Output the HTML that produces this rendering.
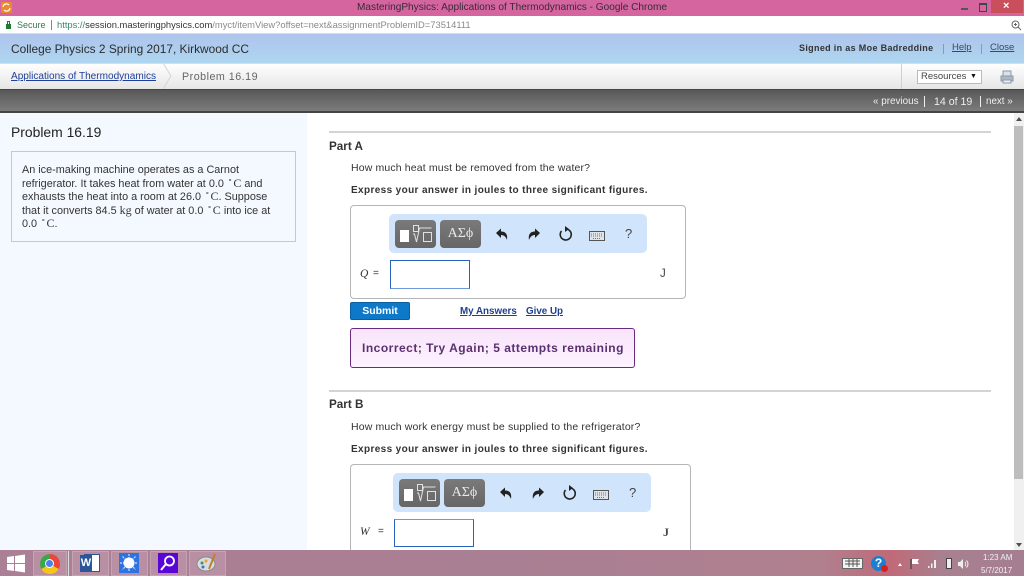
<!DOCTYPE html>
<html><head><meta charset="utf-8"><style>
html,body{margin:0;padding:0;width:1024px;height:576px;overflow:hidden;background:#fff}
body{position:relative;font-family:"Liberation Sans",sans-serif;color:#333}
.a{position:absolute;white-space:nowrap}
.l{color:#1a3a8f;text-decoration:underline}
.s{font-family:"Liberation Serif",serif;font-size:12px;line-height:0}
.s sup{font-size:7px;line-height:0;margin:0 1px}
svg{position:absolute;overflow:visible}
.task{position:absolute;top:551px;height:25px;width:37px;background:#b88fa3;box-shadow:inset 0 0 0 1px #c4a3b3}
</style></head><body>
<!-- title bar -->
<div class="a" style="left:0;top:0;width:1024px;height:16px;background:#d4659e"></div>
<div class="a" style="left:1px;top:2px;width:11px;height:11px;background:#ee8a2c;border-radius:2px"></div>
<svg style="left:1px;top:2px" width="11" height="11"><path d="M2 5a3.5 3.5 0 0 1 6-2M9 6a3.5 3.5 0 0 1-6 2" fill="none" stroke="#fff" stroke-width="1.2"/></svg>
<div class="a" style="left:357px;top:2px;font-size:10.1px;line-height:12px;color:#3a2a3a">MasteringPhysics: Applications of Thermodynamics - Google Chrome</div>
<div class="a" style="left:961px;top:8px;width:7px;height:2px;background:#555"></div>
<div class="a" style="left:979px;top:3px;width:6px;height:6px;border:1px solid #444;border-top-width:2px"></div>
<div class="a" style="left:991px;top:0;width:32px;height:13px;background:#c94f5c"></div>
<div class="a" style="left:1003px;top:0;font-size:11px;line-height:12px;font-weight:bold;color:#fff">×</div>
<!-- address -->
<div class="a" style="left:0;top:16px;width:1024px;height:17px;background:#fff;border-bottom:1px solid #dcdcdc"></div>
<div class="a" style="left:6px;top:24px;width:5px;height:5px;background:#1f7a35"></div>
<div class="a" style="left:7px;top:21px;width:3px;height:3px;border:1px solid #1f7a35;border-bottom:0;box-sizing:border-box"></div>
<div class="a" style="left:17px;top:19px;font-size:9px;line-height:12px;color:#2f7d4a">Secure</div>
<div class="a" style="left:51px;top:20px;width:1px;height:10px;background:#888"></div>
<div class="a" style="left:57px;top:19px;font-size:9.4px;line-height:12px;color:#8a8a8a"><span style="color:#2f8a6a">https://</span><span style="color:#333">session.masteringphysics.com</span>/myct/itemView?offset=next&amp;assignmentProblemID=73514111</div>
<svg style="left:1011px;top:20px" width="11" height="11"><circle cx="4.5" cy="4.5" r="3.5" fill="none" stroke="#666"/><path d="M7 7l3 3M3 4.5h3M4.5 3v3" stroke="#666"/></svg>
<!-- course header -->
<div class="a" style="left:0;top:34px;width:1024px;height:29px;background:linear-gradient(#aec4ec,#aed6f0)"></div>
<div class="a" style="left:11px;top:42px;font-size:11.9px;line-height:14px;color:#2c2c2c">College Physics 2 Spring 2017, Kirkwood CC</div>
<div class="a" style="left:799px;top:42px;font-size:9px;line-height:12px;font-weight:bold;letter-spacing:.33px;color:#333">Signed in as Moe Badreddine</div>
<div class="a" style="left:943px;top:44px;width:1px;height:10px;background:#8a9ab0"></div>
<div class="a" style="left:952px;top:42px;font-size:9.5px;line-height:12px;color:#445;text-decoration:underline">Help</div>
<div class="a" style="left:981px;top:44px;width:1px;height:10px;background:#8a9ab0"></div>
<div class="a" style="left:990px;top:42px;font-size:9.5px;line-height:12px;color:#445;text-decoration:underline">Close</div>
<!-- breadcrumb -->
<div class="a" style="left:0;top:63px;width:1024px;height:26px;background:linear-gradient(#fff,#e6e6e6);border-top:1px solid #ddd;box-sizing:border-box"></div>
<svg style="left:161px;top:63px" width="14" height="26"><path d="M2 0l8 13-8 13" fill="none" stroke="#d5d5d5"/></svg>
<div class="a l" style="left:11px;top:71px;font-size:10.05px;line-height:12px;color:#1d3f9a">Applications of Thermodynamics</div>
<div class="a" style="left:182px;top:70px;font-size:10.7px;line-height:14px;letter-spacing:.5px;color:#666">Problem 16.19</div>
<div class="a" style="left:901px;top:63px;width:1px;height:26px;background:#d0d0d0"></div>
<div class="a" style="left:917px;top:70px;width:65px;height:14px;background:#fff;border:1px solid #bbb;box-sizing:border-box"></div>
<div class="a" style="left:921px;top:71px;font-size:9.5px;line-height:12px;color:#444">Resources</div>
<div class="a" style="left:970px;top:72px;font-size:7px;line-height:10px;color:#111">▼</div>
<svg style="left:1000px;top:70px" width="14" height="14"><path d="M3 1h8v5H3z" fill="#d8e2ec" stroke="#8a98a8"/><path d="M1 6h12v5H1z" fill="#aeb8c4" stroke="#8a98a8"/><path d="M3 10h8v3H3z" fill="#eee" stroke="#8a98a8"/></svg>
<!-- dark nav -->
<div class="a" style="left:0;top:89px;width:1024px;height:24px;background:linear-gradient(#585858,#7c7c7c);border-top:1px solid #444;border-bottom:2px solid #444;box-sizing:border-box"></div>
<div class="a" style="left:873px;top:96px;font-size:9.9px;line-height:12px;color:#f0f0f0">« previous</div>
<div class="a" style="left:924px;top:96px;width:1px;height:11px;background:#eee"></div>
<div class="a" style="left:934px;top:96px;font-size:10.6px;line-height:12px;color:#eee">14 of 19</div>
<div class="a" style="left:980px;top:96px;width:1px;height:11px;background:#eee"></div>
<div class="a" style="left:986px;top:96px;font-size:9.8px;line-height:12px;color:#f0f0f0">next »</div>
<!-- left pane -->
<div class="a" style="left:0;top:113px;width:307px;height:437px;background:#f4f9ff"></div>
<div class="a" style="left:11px;top:124px;font-size:13.9px;line-height:16px;color:#222">Problem 16.19</div>
<div class="a" style="left:11px;top:151px;width:285px;height:91px;border:1px solid #bccbd8;box-sizing:border-box;background:#f4f9ff"></div>
<div class="a" style="left:22px;top:164px;font-size:10.85px;line-height:13.5px;color:#333">An ice-making machine operates as a Carnot<br>refrigerator. It takes heat from water at 0.0 <span class="s"><sup>∘</sup>C</span> and<br>exhausts the heat into a room at 26.0 <span class="s"><sup>∘</sup>C</span>. Suppose<br>that it converts 84.5 <span class="s">kg</span> of water at 0.0 <span class="s"><sup>∘</sup>C</span> into ice at<br>0.0 <span class="s"><sup>∘</sup>C</span>.</div>
<!-- scrollbar -->
<div class="a" style="left:1014px;top:113px;width:10px;height:437px;background:#f0f0f0"></div>
<div class="a" style="left:1014px;top:126px;width:9px;height:353px;background:#bdbdbd"></div>
<div class="a" style="left:1016px;top:117px;width:0;height:0;border:3px solid transparent;border-bottom:4px solid #505050;border-top:0"></div>
<div class="a" style="left:1016px;top:543px;width:0;height:0;border:3px solid transparent;border-top:4px solid #505050;border-bottom:0"></div>
<!-- Part A -->
<div class="a" style="left:329px;top:131px;width:662px;height:2px;background:#d4d4d4"></div>
<div class="a" style="left:329px;top:140px;font-size:11.7px;line-height:13px;font-weight:bold;color:#333">Part A</div>
<div class="a" style="left:351px;top:162px;font-size:10.5px;line-height:13px;letter-spacing:.14px">How much heat must be removed from the water?</div>
<div class="a" style="left:351px;top:184px;font-size:10px;line-height:13px;font-weight:bold;letter-spacing:.37px">Express your answer in joules to three significant figures.</div>
<div class="a" style="left:350px;top:205px;width:336px;height:94px;border:1px solid #b5b5b5;border-radius:4px;box-sizing:border-box;background:#fff"></div>
<div class="a" style="left:389px;top:214px;width:258px;height:39px;background:#d0e4fb;border-radius:5px"></div>
<div class="a" style="left:395px;top:220px;width:41px;height:28px;background:linear-gradient(#7a7a7a,#666);border-radius:4px"></div>
<div class="a" style="left:400px;top:230px;width:9px;height:12px;background:#fff"></div>
<svg style="left:395px;top:220px" width="41" height="28"><path d="M18.5 5.5h5v6h-5zM18 14h1.500l2 8 3-14h12M28.500 12.500h8v9h-8z" fill="none" stroke="#e2e2e2"/></svg>
<div class="a" style="left:440px;top:220px;width:41px;height:28px;background:linear-gradient(#7a7a7a,#666);border-radius:4px;font-family:'Liberation Serif',serif;font-size:14px;line-height:27px;text-align:center;color:#e8e8e8">ΑΣϕ</div>
<svg style="left:495px;top:226px" width="14" height="14"><path d="M1 7l5-4.500v3c4 0 7 2 6 8.500-1-3-3-5-6-5v3z" fill="#222"/></svg>
<svg style="left:527px;top:226px" width="14" height="14"><path d="M13 7L8 2.500v3c-4 0-7 2-6 8.500 1-3 3-5 6-5v3z" fill="#222"/></svg>
<svg style="left:558px;top:226px" width="14" height="16"><path d="M8 3a5.500 5.500 0 1 1-4.500 2" fill="none" stroke="#222" stroke-width="1.600"/><path d="M7 0l4 3-4 3z" fill="#222"/></svg>
<svg style="left:589px;top:231px" width="16" height="10"><rect x=".5" y=".5" width="15" height="9" fill="#dfe4e8" stroke="#555"/><path d="M2 3h12M2 5h12M4 7.500h8" stroke="#777" stroke-dasharray="1 1"/></svg>
<div class="a" style="left:625px;top:226px;font-size:13px;line-height:15px;color:#444">?</div>
<div class="a" style="left:360px;top:267px;font-family:'Liberation Serif',serif;font-size:11.500px;line-height:14px;font-style:italic">Q</div>
<div class="a" style="left:373px;top:267px;font-size:10px;line-height:14px">=</div>
<div class="a" style="left:390px;top:260px;width:80px;height:29px;border:1px solid #2a62c0;box-sizing:border-box;background:#fff;border-bottom-color:#6f97dc"></div>
<div class="a" style="left:660px;top:267px;font-size:11.500px;line-height:14px;color:#444">J</div>
<div class="a" style="left:350px;top:302px;width:60px;height:18px;background:#0f79c9;border:1px solid #0b5fa0;box-sizing:border-box;border-radius:2px;color:#fff;font-size:10.500px;line-height:17px;font-weight:bold;text-align:center">Submit</div>
<div class="a l" style="left:460px;top:306px;font-size:9.800px;line-height:12px;font-weight:bold;color:#1f3f8f">My Answers</div>
<div class="a l" style="left:526px;top:306px;font-size:9.800px;line-height:12px;font-weight:bold;color:#1f3f8f">Give Up</div>
<div class="a" style="left:350px;top:328px;width:285px;height:40px;background:linear-gradient(#f8e4fa,#fdf2ff);border:1px solid #6a2a80;box-sizing:border-box;border-radius:3px"></div>
<div class="a" style="left:362px;top:340px;font-size:12px;line-height:16px;font-weight:bold;letter-spacing:.5px;color:#5a3070">Incorrect; Try Again; 5 attempts remaining</div>
<!-- Part B -->
<div class="a" style="left:329px;top:390px;width:662px;height:2px;background:#d4d4d4"></div>
<div class="a" style="left:329px;top:398px;font-size:11.700px;line-height:13px;font-weight:bold;color:#333">Part B</div>
<div class="a" style="left:351px;top:421px;font-size:10.500px;line-height:13px;letter-spacing:.14px">How much work energy must be supplied to the refrigerator?</div>
<div class="a" style="left:351px;top:443px;font-size:10px;line-height:13px;font-weight:bold;letter-spacing:.37px">Express your answer in joules to three significant figures.</div>
<div class="a" style="left:350px;top:464px;width:341px;height:100px;border:1px solid #b5b5b5;border-radius:4px;box-sizing:border-box;background:#fff"></div>
<div class="a" style="left:393px;top:473px;width:258px;height:39px;background:#d0e4fb;border-radius:5px"></div>
<div class="a" style="left:399px;top:479px;width:41px;height:28px;background:linear-gradient(#7a7a7a,#666);border-radius:4px"></div>
<div class="a" style="left:404px;top:489px;width:9px;height:12px;background:#fff"></div>
<svg style="left:399px;top:479px" width="41" height="28"><path d="M18.5 5.5h5v6h-5zM18 14h1.500l2 8 3-14h12M28.500 12.500h8v9h-8z" fill="none" stroke="#e2e2e2"/></svg>
<div class="a" style="left:444px;top:479px;width:41px;height:28px;background:linear-gradient(#7a7a7a,#666);border-radius:4px;font-family:'Liberation Serif',serif;font-size:14px;line-height:27px;text-align:center;color:#e8e8e8">ΑΣϕ</div>
<svg style="left:499px;top:485px" width="14" height="14"><path d="M1 7l5-4.500v3c4 0 7 2 6 8.500-1-3-3-5-6-5v3z" fill="#222"/></svg>
<svg style="left:531px;top:485px" width="14" height="14"><path d="M13 7L8 2.500v3c-4 0-7 2-6 8.500 1-3 3-5 6-5v3z" fill="#222"/></svg>
<svg style="left:562px;top:485px" width="14" height="16"><path d="M8 3a5.500 5.500 0 1 1-4.500 2" fill="none" stroke="#222" stroke-width="1.600"/><path d="M7 0l4 3-4 3z" fill="#222"/></svg>
<svg style="left:593px;top:490px" width="16" height="10"><rect x=".5" y=".5" width="15" height="9" fill="#dfe4e8" stroke="#555"/><path d="M2 3h12M2 5h12M4 7.500h8" stroke="#777" stroke-dasharray="1 1"/></svg>
<div class="a" style="left:629px;top:485px;font-size:13px;line-height:15px;color:#444">?</div>
<div class="a" style="left:360px;top:525px;font-family:'Liberation Serif',serif;font-size:11.500px;line-height:14px;font-style:italic">W</div>
<div class="a" style="left:378px;top:525px;font-size:10px;line-height:14px">=</div>
<div class="a" style="left:394px;top:519px;width:80px;height:28px;border:1px solid #2a62c0;box-sizing:border-box;background:#fff;border-top-color:#6f97dc"></div>
<div class="a" style="left:663px;top:525px;font-family:'Liberation Serif',serif;font-size:12px;line-height:14px;color:#444;font-weight:bold">J</div>
<!-- taskbar -->
<div class="a" style="left:0;top:550px;width:1024px;height:26px;background:linear-gradient(90deg,#ab7f95 0%,#a97f93 50%,#b0808f 80%,#c06a78 87%,#a8808f 92%,#a57e92 100%)"></div>
<svg style="left:7px;top:554px" width="18" height="18"><path d="M0 3l7-1v7H0zM8 2l10-1.500V9H8zM0 10h7v7l-7-1zM8 10h10v8.500L8 17z" fill="#fff"/></svg>
<div class="task" style="left:33px;width:34px"></div>
<div class="a" style="left:40px;top:554px;width:20px;height:20px;border-radius:50%;background:conic-gradient(#e8473a 0 120deg,#f5c518 120deg 240deg,#3aa84a 240deg 360deg)"></div>
<div class="a" style="left:45px;top:559px;width:7px;height:7px;border-radius:50%;background:#4a80e8;border:1.500px solid #fff"></div>
<div class="a" style="left:68px;top:551px;width:1px;height:25px;background:#ddd"></div>
<div class="task" style="left:72px"></div>
<div class="a" style="left:84px;top:554px;width:16px;height:18px;background:#fff;border:1px solid #2b579a;box-sizing:border-box"></div>
<div class="a" style="left:80px;top:555px;width:12px;height:17px;background:#2b579a;color:#fff;font-size:11px;line-height:17px;font-weight:bold;text-align:center">W</div>
<div class="task" style="left:111px"></div>
<div class="a" style="left:119px;top:553px;width:20px;height:20px;background:#2f73e0"></div>
<svg style="left:119px;top:553px" width="20" height="20"><path d="M10 1v18M1 10h18M3.500 3.500l13 13M16.500 3.500l-13 13" stroke="#cfe0fa" stroke-width="1.200" stroke-dasharray="2 1"/><circle cx="10" cy="10" r="5.500" fill="#fff"/></svg>
<div class="task" style="left:150px"></div>
<div class="a" style="left:158px;top:553px;width:20px;height:20px;background:#5a05d8"></div>
<svg style="left:158px;top:553px" width="20" height="20"><circle cx="11.500" cy="8" r="4.500" fill="none" stroke="#fff" stroke-width="1.800"/><path d="M8 11l-5 6" stroke="#fff" stroke-width="2"/></svg>
<div class="task" style="left:189px"></div>
<svg style="left:196px;top:553px" width="22" height="20"><ellipse cx="10" cy="11" rx="9" ry="7" fill="#d8dce0" stroke="#8a8a8a"/><circle cx="6" cy="10" r="1.500" fill="#3a9a4a"/><circle cx="10" cy="8" r="1.500" fill="#e8a030"/><circle cx="7" cy="14" r="1.500" fill="#3a70d0"/><path d="M19 1l-6 15" stroke="#c08030" stroke-width="2"/></svg>
<div class="a" style="left:842px;top:558px;width:21px;height:11px;background:#f4f4f4;border:1px solid #666;box-sizing:border-box"></div>
<svg style="left:844px;top:559px" width="18" height="9"><path d="M1 2h15M1 5h15M5 0v8M9 0v8M13 0v8" stroke="#555"/></svg>
<div class="a" style="left:871px;top:556px;width:15px;height:15px;border-radius:50%;background:#1a7fd0;color:#fff;font-size:12px;line-height:15px;font-weight:bold;text-align:center">?</div>
<div class="a" style="left:881px;top:565px;width:7px;height:7px;border-radius:50%;background:#d81e1e"></div>
<div class="a" style="left:898px;top:563px;width:0;height:0;border:2.500px solid transparent;border-bottom:3px solid #fff;border-top:0"></div>
<svg style="left:910px;top:558px" width="10" height="12"><path d="M1 1v10" stroke="#333"/><path d="M2 1h7l-1.500 2.500L9 6H2z" fill="#fff"/></svg>
<svg style="left:927px;top:559px" width="10" height="10"><path d="M1 9h1.500V7H1zM4 9h1.500V4.500H4zM7 9h2V1H7z" fill="#eee"/></svg>
<div class="a" style="left:946px;top:558px;width:6px;height:11px;background:#eee;border:1px solid #444;box-sizing:border-box"></div>
<svg style="left:957px;top:558px" width="12" height="12"><path d="M1 4h2l3-3v10L3 8H1z" fill="#eee"/><path d="M8 4a3 3 0 0 1 0 4M9.500 2.500a5 5 0 0 1 0 7" fill="none" stroke="#eee"/></svg>
<div class="a" style="left:983px;top:553px;font-size:8px;line-height:10px;color:#f2f2f2">1:23 AM</div>
<div class="a" style="left:981px;top:566px;font-size:8px;line-height:10px;color:#f2f2f2">5/7/2017</div>
</body></html>
